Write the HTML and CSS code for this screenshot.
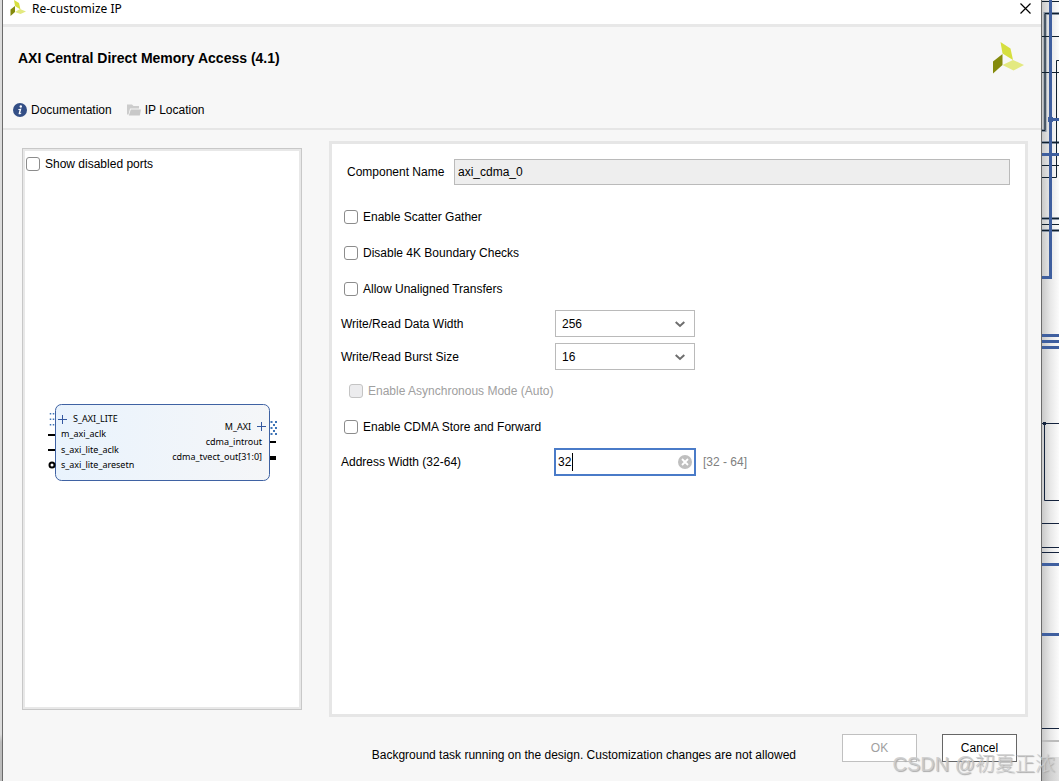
FILE: index.html
```html
<!DOCTYPE html>
<html lang="en">
<head>
  <meta charset="UTF-8">
  <meta name="viewport" content="width=device-width, initial-scale=1.0">
  <title>Re-customize IP</title>
  <link rel="stylesheet" href="styles.css">
</head>
<body>

  <div class="screen">
    <div class="edge"></div>

    <div class="dialog">
      <div class="title-bar">
        <svg class="title-logo" width="16" height="16" viewBox="0 0 32 32">
          <path d="M8 0L18 6L21 19L10 12Z" fill="#d6df3f"/>
          <path d="M1 19L10 12V24L1 32Z" fill="#848a0c"/>
          <path d="M10 24L20 18L32 23L21 28Z" fill="#e3e980"/>
        </svg>
        <span class="title-text">Re-customize IP</span>
        <button class="close-btn" aria-label="Close">
          <svg width="11" height="11" viewBox="0 0 11 11"><path d="M.5 .5L10.500 10.500M10.500 .5L.5 10.500" stroke="#000" stroke-width="1.200"/></svg>
        </button>
      </div>

      <div class="header">
        <div class="header-top">
          <h1>AXI Central Direct Memory Access (4.1)</h1>
          <svg width="32" height="32" viewBox="0 0 32 32">
            <path d="M8.500 0L18.500 6.500L21 18L10.500 11.500Z" fill="#d6df3f"/>
            <path d="M1 19.500L10.500 12V23L1 31.500Z" fill="#848a0c"/>
            <path d="M10.500 23L21 18L32 23L21.500 28.500Z" fill="#e3e980"/>
          </svg>
        </div>
        <div class="links">
          <a href="#">
            <svg width="14" height="14" viewBox="0 0 14 14">
              <circle cx="7" cy="7" r="7" fill="#344f86"/>
              <circle cx="7.800" cy="3.500" r="1.200" fill="#fff"/>
              <path d="M5.300 6.200L8.400 5.500L7.200 10.200L8.400 9.800L8.100 10.700Q6.500 11.800 5.500 11L6.500 6.900L5.200 7Z" fill="#fff"/>
            </svg>
            Documentation
          </a>
          <a href="#">
            <svg width="14" height="14" viewBox="0 0 14 14">
              <path d="M0 1.500H5L6.500 3H12V5.500H3L1.500 11.500H0Z" fill="#ccc"/>
              <path d="M3.800 6.500H14L12.800 12.500H1.800Z" fill="#c8c8c8"/>
            </svg>
            IP Location
          </a>
        </div>
      </div>

      <div class="content">
        <div class="ports-panel">
          <label class="check"><input type="checkbox">Show disabled ports</label>
          <div class="symbol">
            <svg width="230" height="78" viewBox="0 0 230 78">
              <defs>
                <linearGradient id="blockFill">
                  <stop offset="0" stop-color="#e9f3fd"/>
                  <stop offset="1" stop-color="#f5f6f8"/>
                </linearGradient>
              </defs>
              <rect x="7.500" y=".5" width="214" height="76" rx="6" fill="url(#blockFill)" stroke="#3f62a3"/>
              <!-- bus ports -->
              <path d="M2.500 9V23M5.500 9V23" stroke="#3f74b5" stroke-width="1.500" stroke-dasharray="1.500 4"/>
              <path d="M223.500 17V31M228 17V31" stroke="#3f74b5" stroke-width="2" stroke-dasharray="2 4"/>
              <path d="M226 20V28" stroke="#3f74b5" stroke-width="2" stroke-dasharray="2 4"/>
              <path d="M10 15.500H19M14.500 11V20M209 22.500H218M213.500 18V27" stroke="#3558a0"/>
              <!-- single pins -->
              <path d="M0 31H7M0 46H7M222 38H228" stroke="#000" stroke-width="2"/>
              <path d="M222 54H228" stroke="#000" stroke-width="4"/>
              <circle cx="4" cy="61" r="2.500" fill="none" stroke="#000" stroke-width="2"/>
              <g class="port-names">
                <text x="25" y="18">S_AXI_LITE</text>
                <text x="13" y="33">m_axi_aclk</text>
                <text x="13" y="49">s_axi_lite_aclk</text>
                <text x="13" y="64">s_axi_lite_aresetn</text>
              </g>
              <g class="port-names out">
                <text x="203" y="26">M_AXI</text>
                <text x="214" y="41">cdma_introut</text>
                <text x="214" y="56">cdma_tvect_out[31:0]</text>
              </g>
            </svg>
          </div>
        </div>

        <div class="options-panel">
          <div class="name-row">
            <label for="componentName">Component Name</label>
            <input type="text" id="componentName" value="axi_cdma_0" readonly>
          </div>

          <div class="row"><label class="check"><input type="checkbox">Enable Scatter Gather</label></div>
          <div class="row"><label class="check"><input type="checkbox">Disable 4K Boundary Checks</label></div>
          <div class="row"><label class="check"><input type="checkbox">Allow Unaligned Transfers</label></div>

          <div class="field-row">
            <label for="dataWidth">Write/Read Data Width</label>
            <div class="select">
              <select id="dataWidth"><option>256</option></select>
              <svg width="10" height="7" viewBox="0 0 10 7"><path d="M.7 1L5 5L9.300 1" fill="none" stroke="#6e6e6e" stroke-width="2"/></svg>
            </div>
          </div>
          <div class="field-row">
            <label for="burstSize">Write/Read Burst Size</label>
            <div class="select">
              <select id="burstSize"><option>16</option></select>
              <svg width="10" height="7" viewBox="0 0 10 7"><path d="M.7 1L5 5L9.300 1" fill="none" stroke="#6e6e6e" stroke-width="2"/></svg>
            </div>
          </div>

          <div class="row nested"><label class="check disabled"><input type="checkbox" disabled>Enable Asynchronous Mode (Auto)</label></div>
          <div class="row"><label class="check"><input type="checkbox">Enable CDMA Store and Forward</label></div>

          <div class="field-row">
            <label for="addressWidth">Address Width (32-64)</label>
            <div class="number">
              <input type="text" id="addressWidth" value="32">
              <span class="caret"></span>
              <button class="clear-btn" aria-label="Clear">
                <svg width="14" height="14" viewBox="0 0 14 14">
                  <circle cx="7" cy="7" r="7" fill="#bfbfbf"/>
                  <path d="M4 4L10 10M10 4L4 10" stroke="#fff" stroke-width="1.800"/>
                </svg>
              </button>
            </div>
            <span class="range">[32 - 64]</span>
          </div>
        </div>
      </div>

      <div class="footer">
        <span class="status">Background task running on the design. Customization changes are not allowed</span>
        <button class="btn" disabled>OK</button>
        <button class="btn">Cancel</button>
      </div>
    </div>

    <!-- block design behind the dialog -->
    <div class="canvas">
      <svg width="17" height="740" viewBox="0 0 17 740">
        <path d="M0 142.500H17M0 218.500H17M0 230.500H17M17 13.500H3V130.500H0" fill="none" stroke="#8490a0" stroke-width="3"/>
        <path d="M0 1.500H17M17 13.500H3V130.500H0M0 36.500H17M0 72.500H17M17 60.500H14.500V177.500H0M0 142.500H17M0 165.500H17M0 218.500H17M0 224.500H17M0 230.500H17" fill="none" stroke="#10202f"/>
        <path d="M8.500 0V277.500H0M8.500 119.500H17M0 154.500H17M0 335.500H17M0 341.500H17M0 347.500H17M0 564.500H17M0 634.500H17" fill="none" stroke="#3f5f9f" stroke-width="3"/>
        <rect x="6" y="117" width="5" height="5" fill="#3f5f9f"/>
        <path d="M0 423.500H17M2.500 423V500.500H17M0 523.500H17M0 547.500H17M0 552.500H17M0 728.500H17" fill="none" stroke="#14233d"/>
        <rect x="1" y="422" width="3" height="3" fill="#14233d"/>
      </svg>
      <div class="canvas-tabs"></div>
    </div>
  </div>

  <div class="watermark">CSDN @初夏正浓</div>

</body>
</html>
```
FILE: styles.css
```css
* {
  box-sizing: border-box;
}

body {
  margin: 0;
  font-family: "Liberation Sans", Arial, sans-serif;
  font-size: 12px;
  color: #000;
}

input, select, button {
  font: inherit;
  color: inherit;
  margin: 0;
}

svg {
  display: block;
  flex: none;
}

.screen {
  display: grid;
  grid-template-columns: 2px 1fr 17px;
  min-height: 100vh;
}

.edge {
  background: linear-gradient(#dcdcdc 0 94%, #bcbcbc 95%);
}

.dialog {
  display: flex;
  flex-direction: column;
  background-color: #f7f7f7;
  border-left: 1px solid #6b6b6b;
  border-right: 1px solid #6b6b6b;
}

.title-bar {
  display: flex;
  align-items: flex-start;
  height: 27px;
  padding: 0 9px 0 7px;
  background-color: #fff;
  border-bottom: 3px solid #e8e8e8;
}

.title-text {
  margin-left: 6px;
  font-family: "Noto Sans", "Open Sans", sans-serif;
  line-height: 18px;
}

.close-btn {
  margin-left: auto;
  padding: 3px 1px;
  background: none;
  border: none;
}

.header {
  padding: 15px 17px 8px 10px;
  border-bottom: 2px solid #e6e6e6;
}

.header-top {
  display: flex;
  justify-content: space-between;
  align-items: center;
  padding-left: 5px;
}

.header h1 {
  margin: 0;
  font-size: 14px;
}

.links {
  display: flex;
  gap: 15px;
  margin-top: 26px;
}

.links a {
  display: flex;
  align-items: center;
  gap: 4px;
  line-height: 20px;
  color: #000;
  text-decoration: none;
}

.content {
  display: flex;
  flex: 1;
  gap: 27px;
  padding: 11px 13px 0 19px;
}

.ports-panel {
  display: flex;
  flex-direction: column;
  width: 280px;
  margin: 7px 0;
  padding: 5px 1px;
  background-color: #fff;
  border: 1px solid #c8c8c8;
  box-shadow: inset 0 0 0 2px #e8e8e8;
}

.symbol {
  display: flex;
  flex: 1;
  align-items: center;
  justify-content: center;
  padding: 8px 0 0 2px;
}

.port-names {
  font-family: "Noto Sans", "Open Sans", sans-serif;
  font-size: 9px;
}

.out {
  text-anchor: end;
}

.check {
  display: flex;
  align-items: center;
  gap: 5px;
  padding-left: 2px;
  line-height: 20px;
}

.check input {
  appearance: none;
  width: 14px;
  height: 14px;
  background-color: #fff;
  border: 1px solid #8c8c8c;
  border-radius: 3px;
}

.disabled {
  color: #a0a0a0;
}

.disabled input {
  background-color: #ececee;
  border-color: #c4c4c4;
}

.options-panel {
  flex: 1;
  padding: 15px 15px 0 9px;
  background-color: #fff;
  border: 3px solid #e6e6e6;
}

.name-row {
  display: grid;
  grid-template-columns: 107px 1fr;
  align-items: center;
  margin-bottom: 14px;
  padding-left: 6px;
}

.name-row input {
  width: 100%;
  height: 26px;
  padding: 0 3px;
  background-color: #eee;
  border: 1px solid #bababa;
}

.row {
  display: flex;
  align-items: center;
  height: 36px;
  padding-left: 1px;
}

.nested {
  padding-left: 6px;
}

.field-row {
  display: grid;
  grid-template-columns: 213px 142px 1fr;
  align-items: center;
  height: 33px;
}

.select {
  position: relative;
  padding: 0 1px;
}

.select select {
  appearance: none;
  width: 100%;
  height: 27px;
  padding: 0 6px;
  background-color: #fff;
  border: 1px solid #bababa;
  border-radius: 0;
}

.select svg {
  position: absolute;
  top: 11px;
  right: 11px;
  pointer-events: none;
}

.number {
  position: relative;
}

.number input {
  display: block;
  width: 100%;
  height: 28px;
  padding: 0 24px 0 2px;
  border: 2px solid #4a7bc8;
  outline: none;
}

.caret {
  position: absolute;
  top: 5px;
  left: 18px;
  width: 1px;
  height: 18px;
  background-color: #000;
}

.clear-btn {
  position: absolute;
  top: 7px;
  right: 4px;
  padding: 0;
  background: none;
  border: none;
}

.range {
  padding-left: 7px;
  color: #808080;
}

.footer {
  display: flex;
  justify-content: flex-end;
  align-items: flex-end;
  padding: 17px 24px 19px;
}

.status {
  margin-right: 21px;
  line-height: 14px;
}

.btn {
  width: 75px;
  height: 28px;
  margin-left: 25px;
  padding: 0;
  background-color: #fff;
  border: 1px solid #666;
}

.btn:disabled {
  color: #a0a0a0;
  border-color: #c0c0c0;
}

.canvas {
  display: flex;
  flex-direction: column;
  background: linear-gradient(to right, #c9c9c9, #e8e8e8 50%, #fbfbfb);
}

.canvas-tabs {
  flex: 1;
  border-top: 2px solid #bcbcbc;
  background: linear-gradient(transparent 15px, rgba(0, 0, 0, 0.1) 15px);
}

.watermark {
  position: absolute;
  right: 4px;
  bottom: 2px;
  font-family: "Liberation Sans", "Noto Sans CJK SC", sans-serif;
  font-size: 20px;
  font-weight: 300;
  line-height: 30px;
  color: rgba(205, 205, 205, 0.9);
  text-shadow: 1px 1px 1px #aaa;
  pointer-events: none;
}
```
